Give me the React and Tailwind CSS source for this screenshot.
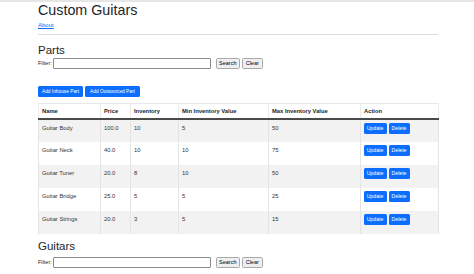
const parts = [
  { name: "Guitar Body", price: "100.0", inv: "10", min: "5", max: "50" },
  { name: "Guitar Neck", price: "40.0", inv: "10", min: "10", max: "75" },
  { name: "Guitar Tuner", price: "20.0", inv: "8", min: "10", max: "50" },
  { name: "Guitar Bridge", price: "25.0", inv: "5", min: "5", max: "25" },
  { name: "Guitar Strings", price: "20.0", inv: "3", min: "5", max: "15" },
];

function FilterRow({ className }) {
  return (
    <div className={"flex items-center h-[11px] " + className}>
      <span className="text-[5.5px] leading-[7px]">Filter:</span>
      <input
        type="text"
        className="ml-[1.5px] w-[158px] h-[11px] border border-[#8a8a8a] rounded-[1px] bg-white outline-none"
      />
      <button className="ml-[4.5px] w-[24px] h-[11px] bg-[#efefef] border border-[#a9a9a9] rounded-[1.5px] text-[5.5px] leading-[9px] text-black">
        Search
      </button>
      <button className="ml-[2px] w-[21px] h-[11px] bg-[#efefef] border border-[#a9a9a9] rounded-[1.5px] text-[5.5px] leading-[9px] text-black">
        Clear
      </button>
    </div>
  );
}

export default function App() {
  return (
    <div className="min-h-[274px] bg-white text-[#212529] font-['Liberation_Sans',Arial,sans-serif]">
      <div className="h-[2px] bg-[#e6e6e6]" />
      <div className="ml-[38px] w-[400px]">
        <h1 className="text-[14.3px] leading-[17px] font-normal">Custom Guitars</h1>
        <a href="#" className="block mt-[3px] w-fit text-[6px] leading-[7px] text-[#0d6efd] underline">
          About
        </a>
        <hr className="mt-[5px] border-t border-[#dcdcdc]" />

        <h2 className="mt-[8px] text-[11.5px] leading-[14px] font-normal">Parts</h2>
        <FilterRow className="mt-[1px]" />

        <div className="mt-[17px] flex gap-[2px]">
          <button className="w-[45px] h-[11px] bg-[#0d6efd] text-white rounded-[1.5px] text-[4.8px] leading-[11px]">
            Add Inhouse Part
          </button>
          <button className="w-[55px] h-[11px] bg-[#0d6efd] text-white rounded-[1.5px] text-[4.8px] leading-[11px]">
            Add Outsourced Part
          </button>
        </div>

        <table className="mt-[6px] w-[400px] table-fixed border-collapse text-[5.8px] leading-[8.5px]">
          <colgroup>
            <col className="w-[62px]" />
            <col className="w-[30px]" />
            <col className="w-[48px]" />
            <col className="w-[90px]" />
            <col className="w-[92px]" />
            <col className="w-[78px]" />
          </colgroup>
          <thead>
            <tr className="border-t border-[#e8e8e8] border-b-2 border-b-[#4a4a4a]">
              {["Name", "Price", "Inventory", "Min Inventory Value", "Max Inventory Value", "Action"].map((h) => (
                <th
                  key={h}
                  className="text-left font-bold px-[3px] pt-[3px] pb-[2.5px] border-x border-[#ececec] align-top"
                >
                  {h}
                </th>
              ))}
            </tr>
          </thead>
          <tbody>
            {parts.map((p, i) => (
              <tr key={p.name} className={"h-[23px] " + (i % 2 === 0 ? "bg-[#f2f2f2]" : "bg-white")}>
                <td className="align-top px-[3px] pt-[3.5px] border-x border-[#e4e4e4] text-[#333]">{p.name}</td>
                <td className="align-top px-[3px] pt-[3.5px] border-x border-[#e4e4e4] text-[#333]">{p.price}</td>
                <td className="align-top px-[3px] pt-[3.5px] border-x border-[#e4e4e4] text-[#333]">{p.inv}</td>
                <td className="align-top px-[3px] pt-[3.5px] border-x border-[#e4e4e4] text-[#333]">{p.min}</td>
                <td className="align-top px-[3px] pt-[3.5px] border-x border-[#e4e4e4] text-[#333]">{p.max}</td>
                <td className="align-top px-[2.5px] pt-[2.5px] border-x border-[#e4e4e4]">
                  <div className="flex gap-[2px]">
                    <button className="w-[23px] h-[11px] bg-[#0d6efd] text-white rounded-[1.5px] text-[5.2px] leading-[11px]">
                      Update
                    </button>
                    <button className="w-[21px] h-[11px] bg-[#0d6efd] text-white rounded-[1.5px] text-[5.2px] leading-[11px]">
                      Delete
                    </button>
                  </div>
                </td>
              </tr>
            ))}
          </tbody>
        </table>

        <h2 className="mt-[5px] text-[11.5px] leading-[14px] font-normal">Guitars</h2>
        <FilterRow className="mt-[4px]" />
      </div>
    </div>
  );
}
